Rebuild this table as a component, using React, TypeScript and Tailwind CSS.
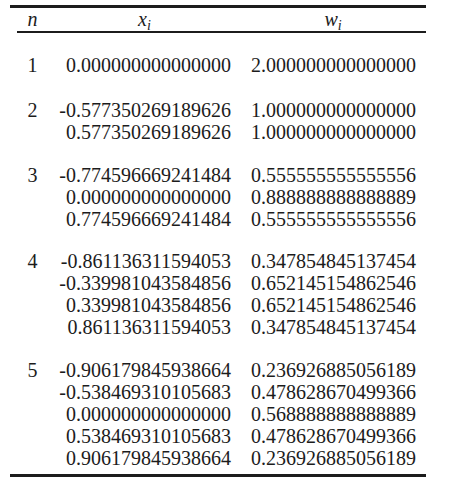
// Gauss–Legendre nodes and weights table

const groups: { n: number; rows: [string, string][]; gap: string }[] = [
  { n: 1, gap: 'mt-[21px]', rows: [['0.000000000000000', '2.000000000000000']] },
  {
    n: 2,
    gap: 'mt-[23px]',
    rows: [
      ['-0.577350269189626', '1.000000000000000'],
      ['0.577350269189626', '1.000000000000000'],
    ],
  },
  {
    n: 3,
    gap: 'mt-[21px]',
    rows: [
      ['-0.774596669241484', '0.555555555555556'],
      ['0.000000000000000', '0.888888888888889'],
      ['0.774596669241484', '0.555555555555556'],
    ],
  },
  {
    n: 4,
    gap: 'mt-[20px]',
    rows: [
      ['-0.861136311594053', '0.347854845137454'],
      ['-0.339981043584856', '0.652145154862546'],
      ['0.339981043584856', '0.652145154862546'],
      ['0.861136311594053', '0.347854845137454'],
    ],
  },
  {
    n: 5,
    gap: 'mt-[21px]',
    rows: [
      ['-0.906179845938664', '0.236926885056189'],
      ['-0.538469310105683', '0.478628670499366'],
      ['0.000000000000000', '0.568888888888889'],
      ['0.538469310105683', '0.478628670499366'],
      ['0.906179845938664', '0.236926885056189'],
    ],
  },
];

function MathSub({ base }: { base: string }) {
  return (
    <span className="italic">
      {base}
      <span className="relative top-[4px] text-[14px]">i</span>
    </span>
  );
}

export default function App() {
  return (
    <div className="w-[460px] h-[487px] bg-white text-[#1c1c1c] pt-[5px] overflow-hidden font-['Liberation_Serif']">
      {/* top rule */}
      <div className="ml-[10px] w-[416px] h-[2.5px] bg-[#1c1c1c]" />

      {/* header */}
      <div className="flex pl-[17px] h-[22px] leading-[22px] text-[20px]">
        <div className="w-[31px] text-center italic">n</div>
        <div className="ml-[10px] w-[173px] text-center">
          <MathSub base="x" />
        </div>
        <div className="ml-[19px] w-[166px] text-center">
          <MathSub base="w" />
        </div>
      </div>

      {/* mid rule */}
      <div className="mt-[1.5px] ml-[17px] w-[409px] h-[1.5px] bg-[#1c1c1c]" />

      {groups.map((g) => (
        <div key={g.n} className={g.gap}>
          {g.rows.map(([x, w], i) => (
            <div key={i} className="flex pl-[17px] h-[22px] leading-[22px] text-[20px]">
              <div className="w-[31px] text-center">{i === 0 ? g.n : ''}</div>
              <div className="w-[183px] text-right">{x}</div>
              <div className="w-[185px] text-right">{w}</div>
            </div>
          ))}
        </div>
      ))}

      {/* bottom rule */}
      <div className="mt-[5.5px] ml-[10px] w-[416px] h-[3px] bg-[#1c1c1c]" />
    </div>
  );
}
